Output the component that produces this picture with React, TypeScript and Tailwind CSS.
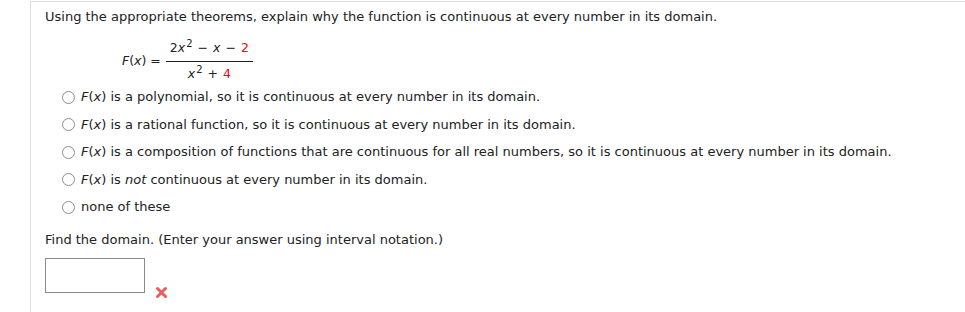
export default function App() {
  const options = [
    { key: 'a', body: <>is a polynomial, so it is continuous at every number in its domain.</> },
    { key: 'b', body: <>is a rational function, so it is continuous at every number in its domain.</> },
    {
      key: 'c',
      body: (
        <>is a composition of functions that are continuous for all real numbers, so it is continuous at every number in its domain.</>
      ),
    },
    { key: 'd', body: <>is <i>not</i> continuous at every number in its domain.</> },
  ];

  const Fx = () => (
    <span>
      <i>F</i>(<i>x</i>)
    </span>
  );

  const Sq = () => <span className="text-[10px] relative top-[-5px] ml-[1px]">2</span>;
  const Op = ({ c }: { c: string }) => <span className="mx-[5px]">{c}</span>;

  return (
    <div className="w-[965px] h-[312px] bg-white overflow-hidden font-['DejaVu_Sans',sans-serif] text-[13px] text-[#222]">
      <div className="ml-[30px] mt-[1px] h-full border-l border-t border-[#dcdcdc] pl-[14px] pt-[6px]">
        <p className="leading-[18px]">
          Using the appropriate theorems, explain why the function is continuous at every number in its domain.
        </p>

        {/* function */}
        <div className="flex items-center ml-[77px] mt-[13px] text-[12.5px]">
          <span className="mr-[5px]">
            <Fx /> =
          </span>
          <div className="inline-flex flex-col items-center">
            <span className="px-[4px] pb-[3px] leading-[18px]">
              2<i>x</i>
              <Sq />
              <Op c="−" />
              <i>x</i>
              <Op c="−" />
              <span className="text-[#ff0000]">2</span>
            </span>
            <span className="w-full border-t border-[#222]" />
            <span className="pt-[3px] leading-[17px]">
              <i>x</i>
              <Sq />
              <Op c="+" />
              <span className="text-[#ff0000]">4</span>
            </span>
          </div>
        </div>

        {/* choices */}
        <div className="mt-[5px] ml-[17px] flex flex-col gap-[9.5px]">
          {options.map((o) => (
            <label key={o.key} className="flex items-center gap-[6px] leading-[18px]">
              <span className="w-[13px] h-[13px] rounded-full border border-[#8d8d8d] bg-white shrink-0" />
              <span>
                <Fx /> {o.body}
              </span>
            </label>
          ))}
          <label className="flex items-center gap-[6px] leading-[18px]">
            <span className="w-[13px] h-[13px] rounded-full border border-[#8d8d8d] bg-white shrink-0" />
            <span>none of these</span>
          </label>
        </div>

        <p className="mt-[15px] leading-[18px]">Find the domain. (Enter your answer using interval notation.)</p>

        <div className="mt-[9px] flex items-end gap-[10px]">
          <div className="w-[100px] h-[35px] border border-[#8a8a8a] bg-white" />
          <svg width="13" height="13" viewBox="0 0 13 13" className="mb-[-6px]">
            <path d="M2.5 2.5 L10.5 10.5 M10.5 2.5 L2.5 10.5" stroke="#ef5a5a" strokeWidth="3" strokeLinecap="round" />
          </svg>
        </div>
      </div>
    </div>
  );
}
